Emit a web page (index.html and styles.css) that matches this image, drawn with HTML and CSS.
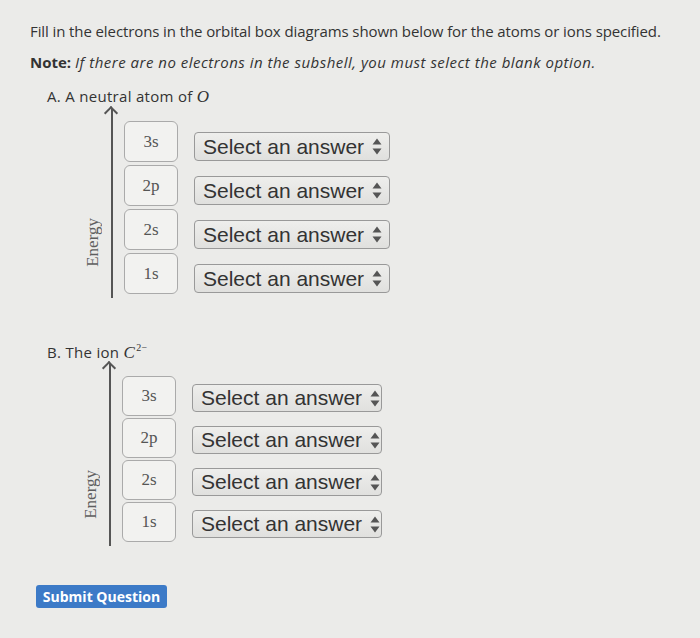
FILE: index.html
```html
<!DOCTYPE html>
<html>
<head>
<meta charset="utf-8">
<link rel="stylesheet" href="styles.css">
</head>
<body>
<div class="page">
  <p class="intro">Fill in the electrons in the orbital box diagrams shown below for the atoms or ions specified.</p>
  <p class="note"><b>Note:</b> <i>If there are no electrons in the subshell, you must select the blank option.</i></p>

  <div class="part part-a">
    <div class="heading">A. A neutral atom of <span class="math">O</span></div>
    <div class="diagram">
      <div class="axis">
        <span class="energy">Energy</span>
        <div class="arrow"></div>
      </div>
      <div class="rows">
        <div class="row"><div class="orb">3s</div><div class="select">Select an answer<span class="caret"><svg width="10" height="17" viewBox="0 0 10 17"><path d="M5 0.5 L9.5 6.5 H0.5 Z M5 16.5 L9.5 10.5 H0.5 Z" fill="#555"/></svg></span></div></div>
        <div class="row"><div class="orb">2p</div><div class="select">Select an answer<span class="caret"><svg width="10" height="17" viewBox="0 0 10 17"><path d="M5 0.5 L9.5 6.5 H0.5 Z M5 16.5 L9.5 10.5 H0.5 Z" fill="#555"/></svg></span></div></div>
        <div class="row"><div class="orb">2s</div><div class="select">Select an answer<span class="caret"><svg width="10" height="17" viewBox="0 0 10 17"><path d="M5 0.5 L9.5 6.5 H0.5 Z M5 16.5 L9.5 10.5 H0.5 Z" fill="#555"/></svg></span></div></div>
        <div class="row"><div class="orb">1s</div><div class="select">Select an answer<span class="caret"><svg width="10" height="17" viewBox="0 0 10 17"><path d="M5 0.5 L9.5 6.5 H0.5 Z M5 16.5 L9.5 10.5 H0.5 Z" fill="#555"/></svg></span></div></div>
      </div>
    </div>
  </div>

  <div class="part part-b">
    <div class="heading">B. The ion <span class="math">C</span><sup class="charge">2−</sup></div>
    <div class="diagram">
      <div class="axis">
        <span class="energy">Energy</span>
        <div class="arrow"></div>
      </div>
      <div class="rows">
        <div class="row"><div class="orb">3s</div><div class="select">Select an answer<span class="caret"><svg width="10" height="17" viewBox="0 0 10 17"><path d="M5 0.5 L9.5 6.5 H0.5 Z M5 16.5 L9.5 10.5 H0.5 Z" fill="#555"/></svg></span></div></div>
        <div class="row"><div class="orb">2p</div><div class="select">Select an answer<span class="caret"><svg width="10" height="17" viewBox="0 0 10 17"><path d="M5 0.5 L9.5 6.5 H0.5 Z M5 16.5 L9.5 10.5 H0.5 Z" fill="#555"/></svg></span></div></div>
        <div class="row"><div class="orb">2s</div><div class="select">Select an answer<span class="caret"><svg width="10" height="17" viewBox="0 0 10 17"><path d="M5 0.5 L9.5 6.5 H0.5 Z M5 16.5 L9.5 10.5 H0.5 Z" fill="#555"/></svg></span></div></div>
        <div class="row"><div class="orb">1s</div><div class="select">Select an answer<span class="caret"><svg width="10" height="17" viewBox="0 0 10 17"><path d="M5 0.5 L9.5 6.5 H0.5 Z M5 16.5 L9.5 10.5 H0.5 Z" fill="#555"/></svg></span></div></div>
      </div>
    </div>
  </div>

  <button class="submit">Submit Question</button>
</div>
</body>
</html>
```

FILE: styles.css
```css
html, body {
  margin: 0;
  padding: 0;
  background: #ebebe9;
}
.page {
  width: 700px;
  height: 638px;
  box-sizing: border-box;
  padding: 21px 0 0 30px;
  font-family: "Open Sans", "DejaVu Sans", sans-serif;
  color: #333;
  font-size: 15px;
}
.intro {
  margin: 0;
  line-height: 20px;
  letter-spacing: -0.1px;
  white-space: nowrap;
}
.note {
  margin: 11px 0 0 0;
  line-height: 20px;
  white-space: nowrap;
}
.note i {
  letter-spacing: 0.5px;
}
.heading {
  line-height: 20px;
  margin-left: 17px;
  letter-spacing: 0.3px;
}
.math {
  font-family: "Liberation Serif", serif;
  font-style: italic;
  font-size: 17px;
}
.charge {
  font-family: "Liberation Serif", serif;
  font-size: 10px;
  vertical-align: 7px;
  line-height: 0;
  margin-left: 1px;
}
.part-a {
  margin-top: 14px;
}
.part-b {
  margin-top: 48px;
}
.diagram {
  display: flex;
  margin-left: 50px;
}
.part-a .diagram { margin-top: 2px; }
.part-b .diagram { margin-top: 1px; margin-left: 48px; }
.axis {
  position: relative;
  display: flex;
  align-items: center;
  width: 44px;
}
.energy {
  font-family: "Liberation Serif", serif;
  font-size: 17px;
  color: #5e5e5e;
  writing-mode: vertical-rl;
  transform: rotate(180deg);
  margin-left: 3px;
  margin-top: 82px;
}
.arrow {
  position: absolute;
  left: 31px;
  top: 0;
  bottom: -4px;
  width: 2px;
  background: #555;
}
.arrow::before {
  content: "";
  position: absolute;
  left: -5px;
  top: -1px;
  width: 8px;
  height: 8px;
  border-left: 2px solid #555;
  border-top: 2px solid #555;
  transform: rotate(45deg);
  transform-origin: center;
}
.rows {
  display: flex;
  flex-direction: column;
  gap: 3px;
  padding-top: 12px;
}
.part-b .rows {
  gap: 2px;
}
.row {
  display: flex;
  align-items: flex-start;
  gap: 16px;
}
.orb {
  width: 54px;
  height: 41px;
  box-sizing: border-box;
  border: 1.5px solid #aaa;
  border-radius: 6px;
  background: #f2f2f0;
  display: flex;
  align-items: center;
  justify-content: center;
  font-family: "Liberation Serif", serif;
  font-size: 17px;
  color: #555;
}
.part-b .orb {
  height: 40px;
}
.select {
  width: 196px;
  height: 29px;
  box-sizing: border-box;
  margin-top: 11px;
  border: 1.5px solid #999;
  border-radius: 4px;
  background: linear-gradient(#eeeeec, #e0e0de);
  display: flex;
  align-items: center;
  gap: 8px;
  padding: 0 0 0 8px;
  font-family: "Liberation Sans", Arial, sans-serif;
  font-size: 21px;
  color: #333;
}
.part-b .select {
  width: 190px;
  margin-top: 8px;
  height: 28px;
}
.caret {
  display: flex;
  align-items: center;
}
.submit {
  display: block;
  margin-top: 43px;
  margin-left: 6px;
  width: 131px;
  height: 23px;
  border: none;
  border-radius: 3px;
  background: #3c7ac7;
  color: #fff;
  font-family: "Open Sans", "DejaVu Sans", sans-serif;
  font-weight: bold;
  font-size: 14px;
  padding: 0;
}
```
